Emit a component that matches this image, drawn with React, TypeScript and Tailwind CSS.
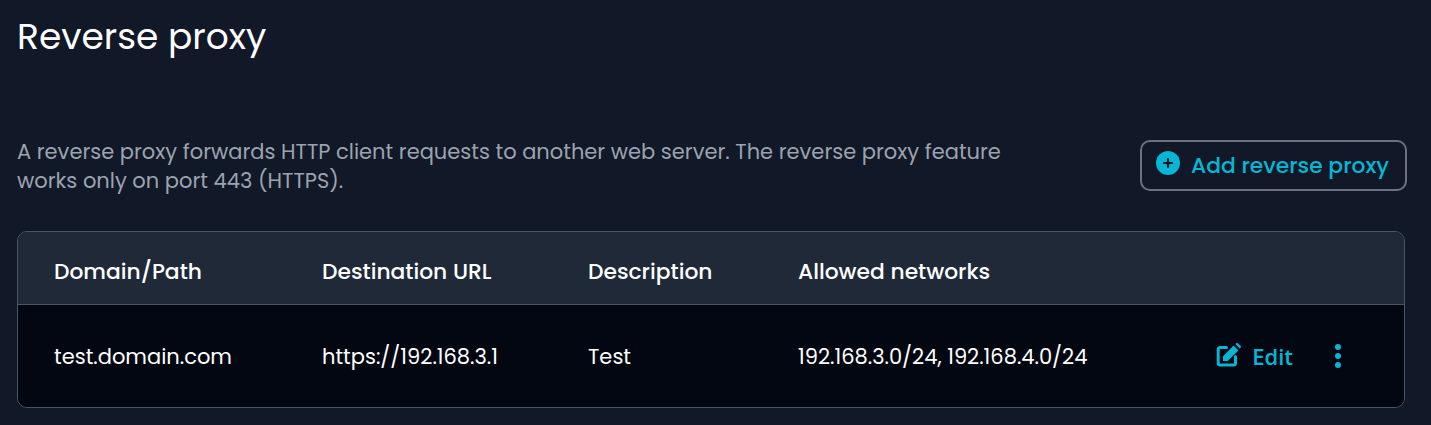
const Plus = () => (
  <svg viewBox="0 0 24 24" className="h-[24px] w-[24px]" fill="none">
    <circle cx="12" cy="12" r="12" fill="#06b6d4" />
    <path d="M12 8v8M8 12h8" stroke="#111827" strokeWidth="2.2" strokeLinecap="round" />
  </svg>
);

const EditIcon = () => (
  <svg viewBox="0 0 25 24" className="h-[24px] w-[25px]" fill="none">
    <path
      d="M10.5 4.5H4.2a2 2 0 0 0-2 2V20a2 2 0 0 0 2 2h13.3a2 2 0 0 0 2-2v-6.5"
      stroke="#06b6d4"
      strokeWidth="3"
      strokeLinecap="round"
    />
    <path
      d="M17.6 2.6 7 13.2V18h4.8L22.4 7.4zM19.4 1l1-.8a1.2 1.2 0 0 1 1.5 0l2.8 2.8a1.2 1.2 0 0 1 0 1.5l-.9 1z"
      fill="#06b6d4"
    />
  </svg>
);

const columns = [
  { label: "Domain/Path", width: "w-[304px] pl-[36px]" },
  { label: "Destination URL", width: "w-[266px]" },
  { label: "Description", width: "w-[210px]" },
  { label: "Allowed networks", width: "flex-1" },
];

export default function App() {
  return (
    <div className="h-[425px] overflow-hidden bg-[#111827] px-[17px] font-['Poppins','Inter','Noto_Sans',sans-serif] text-white">
      <h1 className="pt-[14px] text-[36px] leading-[46px]">Reverse proxy</h1>

      <div className="mt-[77px] flex items-start justify-between">
        <p className="w-[1000px] text-[21px] leading-[29px] text-[#9ca3af]">
          A reverse proxy forwards HTTP client requests to another web server. The reverse proxy feature works only on port 443 (HTTPS).
        </p>
        <button className="mr-[7px] mt-[3px] flex h-[51px] w-[267px] items-center justify-center gap-[11px] rounded-[10px] border-2 border-[#6b7280] text-[21.8px] font-medium text-[#06b6d4]">
          <span className="mt-[-6px] ml-[-2px]">
            <Plus />
          </span>
          <span className="mt-[2px]">Add reverse proxy</span>
        </button>
      </div>

      <div className="mr-[9px] mt-[36px] overflow-hidden rounded-[10px] border border-[#4b5563]">
        <div className="flex h-[72px] items-center bg-[#1f2937] pt-[9px] text-[21.8px] font-medium">
          {columns.map((c) => (
            <div key={c.label} className={c.width}>
              {c.label}
            </div>
          ))}
        </div>
        <div className="flex h-[103px] items-center border-t border-[#4b5563] bg-[#030712] pt-[2px] text-[21px]">
          <div className="w-[304px] pl-[36px]">test.domain.com</div>
          <div className="w-[266px]">https://192.168.3.1</div>
          <div className="w-[210px]">Test</div>
          <div className="flex-1">192.168.3.0/24, 192.168.4.0/24</div>
          <div className="mr-[42px] flex items-center gap-[11px] font-['Open_Sans',sans-serif] text-[22px] font-semibold text-[#06b6d4]">
            <span className="mt-[-4px]">
              <EditIcon />
            </span>
            <span className="mt-[-2px]">Edit</span>
          </div>
          <div className="mr-[63px] mt-[-2px] flex flex-col gap-[3px]">
            <span className="h-[6px] w-[6px] rounded-full bg-[#06b6d4]" />
            <span className="h-[6px] w-[6px] rounded-full bg-[#06b6d4]" />
            <span className="h-[6px] w-[6px] rounded-full bg-[#06b6d4]" />
          </div>
        </div>
      </div>
    </div>
  );
}
